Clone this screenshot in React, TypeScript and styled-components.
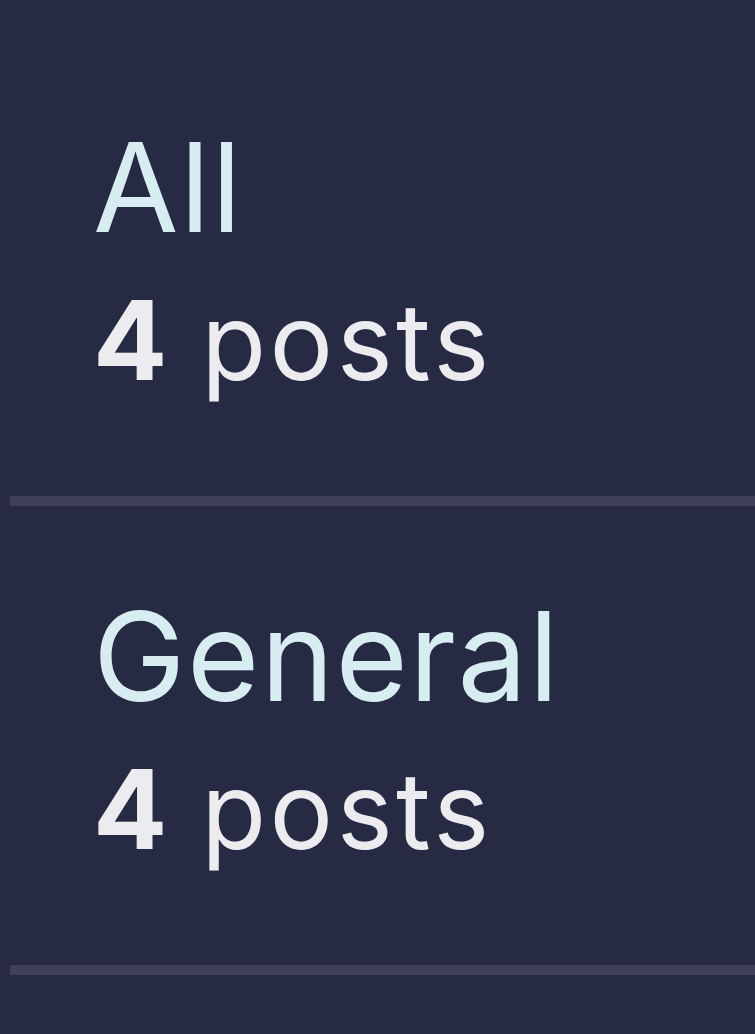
import React from 'react';
import styled, { createGlobalStyle } from 'styled-components';

const GlobalStyle = createGlobalStyle`
  html, body {
    margin: 0;
    padding: 0;
    background: #262a42;
  }
  body {
    font-family: Inter, "Noto Sans", "Liberation Sans", sans-serif;
    -webkit-font-smoothing: antialiased;
  }
`;

const categories = [
  { name: 'All', count: 4 },
  { name: 'General', count: 4 },
];

function App() {
  return (
    <>
      <GlobalStyle />
      <List>
        {categories.map((c) => (
          <Item key={c.name}>
            <Title>{c.name}</Title>
            <Count>
              <strong>{c.count}</strong> posts
            </Count>
          </Item>
        ))}
      </List>
    </>
  );
}

export default App;

const List = styled.ul`
  list-style: none;
  margin: 0;
  padding: 37px 0 0 10px;
  height: 1034px;
  box-sizing: border-box;
  overflow: hidden;
`;

const Item = styled.li`
  padding: 75px 0 79px 83px;
  border-bottom: 10px solid #3d4056;
`;

const Title = styled.div`
  color: #d7edf1;
  font-size: 124px;
  line-height: 150px;
  font-weight: 400;
  letter-spacing: 1.5px;
`;

const Count = styled.div`
  margin-top: 3px;
  color: #ececf0;
  font-size: 106px;
  line-height: 150px;
  font-weight: 400;
  letter-spacing: 3.5px;

  strong {
    font-weight: 700;
    font-size: 110px;
    letter-spacing: 0.5px;
  }
`;
